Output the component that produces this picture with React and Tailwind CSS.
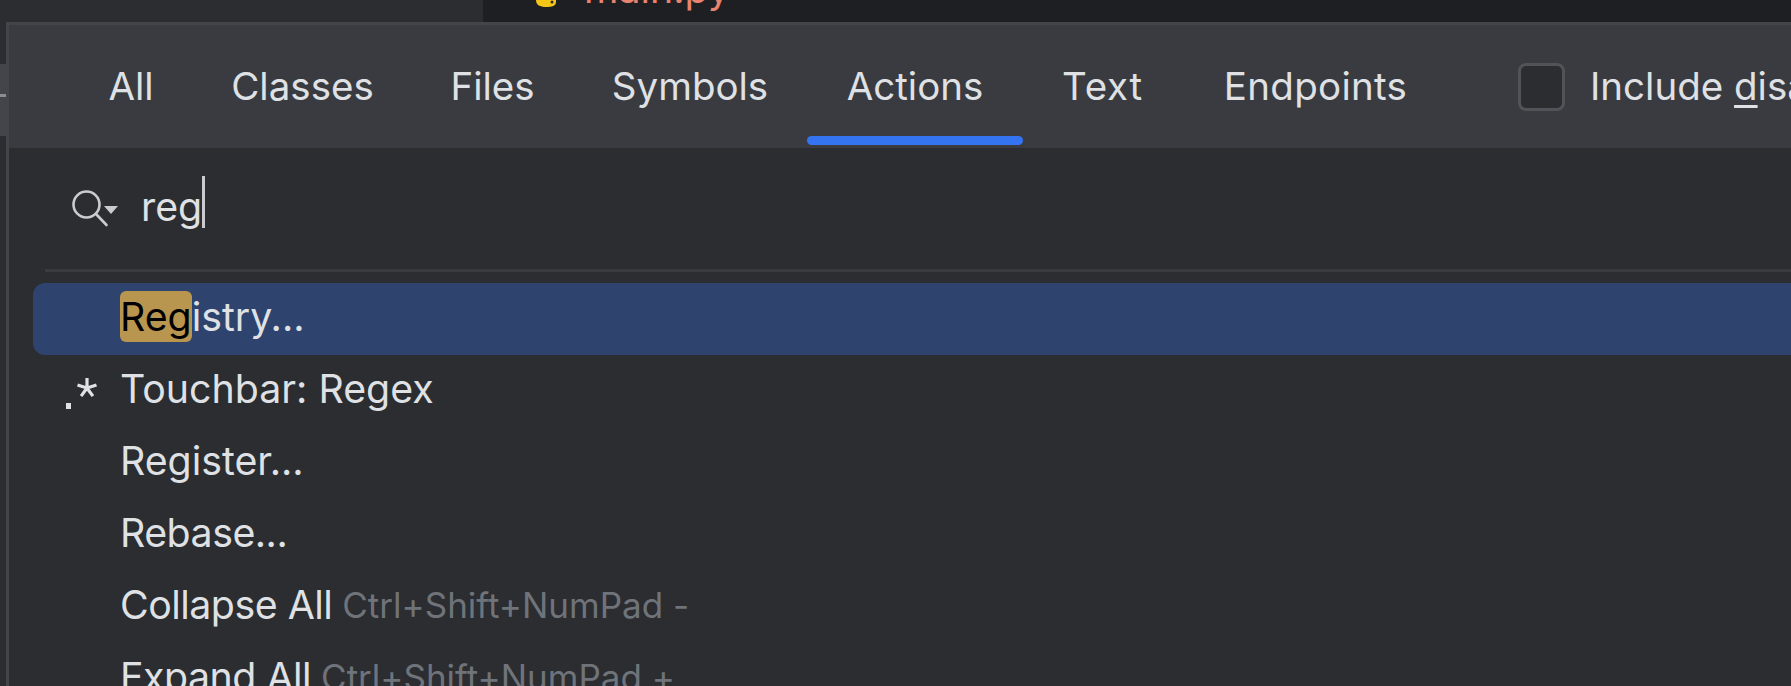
const TABS = [
  { label: 'All', className: 'w-[124px]' },
  { label: 'Classes', className: 'w-[219px]' },
  { label: 'Files', className: 'w-[161px]' },
  { label: 'Symbols', className: 'w-[234px]' },
  { label: 'Actions', className: 'w-[216px]', active: true },
  { label: 'Text', className: 'w-[159px] tracking-[0.8px]' },
  { label: 'Endpoints', className: 'w-[267px] tracking-[0.3px]' },
]

const ROWS = [
  { label: 'Touchbar: Regex', icon: true },
  { label: 'Register...' },
  { label: 'Rebase...', tight: true },
  { label: 'Collapse All', shortcut: 'Ctrl+Shift+NumPad -', tight: true },
  { label: 'Expand All', shortcut: 'Ctrl+Shift+NumPad +', tight: true },
]

function SearchIcon() {
  return (
    <svg width="38" height="38" viewBox="0 0 38 38" fill="none" className="shrink-0">
      <circle cx="14.5" cy="14.5" r="13" stroke="#c9cbd0" strokeWidth="2.6" />
      <path d="M24 24 L34.5 35" stroke="#c9cbd0" strokeWidth="2.6" strokeLinecap="round" />
    </svg>
  )
}

function RegexIcon() {
  return (
    <svg width="32" height="32" viewBox="0 0 32 32" fill="none" className="absolute left-[57px] top-[23px]">
      <rect x="0" y="25" width="5" height="6" fill="#dfe1e5" />
      <path d="M21 10 V0 M21 10 L30.5 6.9 M21 10 L26.9 18.1 M21 10 L15.1 18.1 M21 10 L11.5 6.9" stroke="#dfe1e5" strokeWidth="3.2" />
    </svg>
  )
}

function Row({ label, shortcut, icon, tight }) {
  return (
    <div className="relative flex h-[72px] items-center pb-[3px] pl-[111px] pr-2">
      {icon && <RegexIcon />}
      <span className={tight ? 'whitespace-nowrap tracking-[-0.5px]' : 'whitespace-nowrap'}>{label}</span>
      {shortcut && <span className="ml-[10px] whitespace-nowrap text-[35px] text-[#6f737a]">{shortcut}</span>}
    </div>
  )
}

export default function App() {
  return (
    <div className="relative h-[686px] w-[1791px] overflow-hidden bg-[#2b2d30] font-['Inter',sans-serif] text-[39.3px] text-[#dfe1e5]">
      {/* editor peeking out above the popup */}
      <div className="flex h-[22px]">
        <div className="w-[483px] bg-[#2b2d30]" />
        <div className="relative flex-1 overflow-hidden bg-[#1e1f22]">
          <svg width="24" height="9" viewBox="0 0 24 9" className="absolute left-[53px] top-0">
            <path d="M0 0 H20 V2 C20 6 16 7 10 7 C4 7 0 5 0 0Z" fill="#f5c518" />
            <circle cx="16" cy="2" r="1.5" fill="#2b2d30" />
          </svg>
          <span className="absolute left-[101px] top-[-40px] whitespace-nowrap text-[#e8836f]">main.py</span>
        </div>
      </div>

      <div className="absolute left-0 top-[64px] h-[72px] w-[8px] bg-[#43454a]">
        <div className="mt-[30px] h-[3px] w-[6px] bg-[#8a8d93]" />
      </div>

      {/* search everywhere popup */}
      <div className="relative ml-[6px] h-[664px] border-l-[3px] border-t-[3px] border-[#43454a] bg-[#2b2d30]">
        <div className="relative flex h-[123px] items-center whitespace-nowrap bg-[#393b40] pl-[60px] text-[38.5px]">
          {TABS.map((tab) => (
            <div key={tab.label} className={`relative flex h-full shrink-0 items-center justify-center ${tab.className}`}>
              <span>{tab.label}</span>
              {tab.active && <div className="absolute bottom-[3px] left-0 right-0 h-[9px] rounded-full bg-[#3574f0]" />}
            </div>
          ))}
          <div className="ml-[69px] h-[48px] w-[47px] shrink-0 rounded-[8px] border-[3px] border-[#505358] bg-[#2b2d30]" />
          <span className="ml-[25px]">
            Include <span className="underline decoration-[3px] underline-offset-[5px]">d</span>isabled actions
          </span>
        </div>

        <div className="flex h-[121px] items-center pl-[63px]">
          <SearchIcon />
          <svg width="16" height="10" viewBox="0 0 16 10" className="ml-[-7px] mt-[3px] shrink-0">
            <path d="M1 1 H15 L8 9Z" fill="#c9cbd0" />
          </svg>
          <span className="relative ml-[22px] mt-[-2px]">
            reg
            <span className="absolute right-[-3px] top-[-2px] h-[52px] w-[3px] bg-[#c9cbd0]" />
          </span>
        </div>
        <div className="ml-[36px] h-[3px] bg-[#393b40]" />

        <div className="mt-[11px]">
          <div className="ml-[24px] flex h-[72px] items-center rounded-l-[12px] bg-[#2e436e] pb-[3px] pl-[87px]">
            <span className="whitespace-nowrap">
              <span className="inline-block h-[51px] rounded-[6px] bg-[#b89650] leading-[51px] text-black">Reg</span>istry...
            </span>
          </div>
          {ROWS.map((row) => (
            <Row key={row.label} {...row} />
          ))}
        </div>
      </div>
    </div>
  )
}
